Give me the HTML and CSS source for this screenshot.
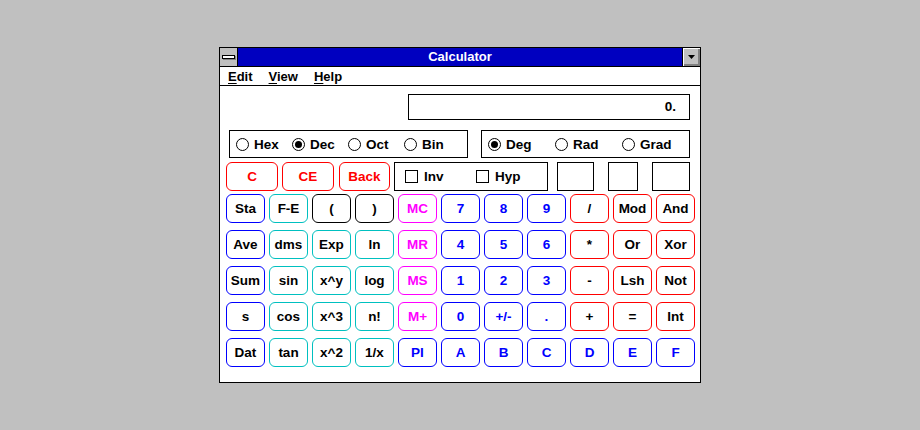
FILE: index.html
```html
<!DOCTYPE html>
<html lang="en">
<head>
    <meta charset="UTF-8">
    <title>Calculator</title>
    <link rel="stylesheet" href="styles.css">
</head>
<body>
    <div class="window">
        <div class="titlebar">
            <div class="sysmenu"><span class="sysbar"></span></div>
            <div class="title">Calculator</div>
            <div class="minbtn">
                <svg width="9" height="5" viewBox="0 0 9 5"><path d="M1 0h7L4.5 4z" fill="#000"/></svg>
            </div>
        </div>
        <div class="menubar">
            <span class="menu-item"><u>E</u>dit</span>
            <span class="menu-item"><u>V</u>iew</span>
            <span class="menu-item"><u>H</u>elp</span>
        </div>

        <div class="content">
            <div class="display-row">
                <div class="display">0.</div>
            </div>

            <div class="mode-row">
                <div class="group radix">
                    <span class="radio"><span class="circle"></span>Hex</span>
                    <span class="radio"><span class="circle on"></span>Dec</span>
                    <span class="radio"><span class="circle"></span>Oct</span>
                    <span class="radio"><span class="circle"></span>Bin</span>
                </div>
                <div class="group angle">
                    <span class="radio"><span class="circle on"></span>Deg</span>
                    <span class="radio"><span class="circle"></span>Rad</span>
                    <span class="radio"><span class="circle"></span>Grad</span>
                </div>
            </div>

            <div class="clear-row">
                <button class="key red wide c">C</button>
                <button class="key red wide ce">CE</button>
                <button class="key red wide back">Back</button>
                <div class="group invhyp">
                    <span class="check"><span class="box"></span>Inv</span>
                    <span class="check"><span class="box"></span>Hyp</span>
                </div>
                <div class="memo memo1"></div>
                <div class="memo memo2"></div>
                <div class="memo memo3"></div>
            </div>

            <div class="keys">
                <button class="key stat">Sta</button>
                <button class="key fn">F-E</button>
                <button class="key paren">(</button>
                <button class="key paren">)</button>
                <button class="key mem">MC</button>
                <button class="key num">7</button>
                <button class="key num">8</button>
                <button class="key num">9</button>
                <button class="key op">/</button>
                <button class="key op">Mod</button>
                <button class="key op">And</button>

                <button class="key stat">Ave</button>
                <button class="key fn">dms</button>
                <button class="key fn">Exp</button>
                <button class="key fn">ln</button>
                <button class="key mem">MR</button>
                <button class="key num">4</button>
                <button class="key num">5</button>
                <button class="key num">6</button>
                <button class="key op">*</button>
                <button class="key op">Or</button>
                <button class="key op">Xor</button>

                <button class="key stat">Sum</button>
                <button class="key fn">sin</button>
                <button class="key fn">x^y</button>
                <button class="key fn">log</button>
                <button class="key mem">MS</button>
                <button class="key num">1</button>
                <button class="key num">2</button>
                <button class="key num">3</button>
                <button class="key op">-</button>
                <button class="key op">Lsh</button>
                <button class="key op">Not</button>

                <button class="key stat">s</button>
                <button class="key fn">cos</button>
                <button class="key fn">x^3</button>
                <button class="key fn">n!</button>
                <button class="key mem">M+</button>
                <button class="key num">0</button>
                <button class="key num">+/-</button>
                <button class="key num">.</button>
                <button class="key op">+</button>
                <button class="key op">=</button>
                <button class="key op">Int</button>

                <button class="key stat">Dat</button>
                <button class="key fn">tan</button>
                <button class="key fn">x^2</button>
                <button class="key fn">1/x</button>
                <button class="key num">PI</button>
                <button class="key num">A</button>
                <button class="key num">B</button>
                <button class="key num">C</button>
                <button class="key num">D</button>
                <button class="key num">E</button>
                <button class="key num">F</button>
            </div>
        </div>
    </div>
</body>
</html>
```

FILE: styles.css
```css
body {
    margin: 0;
    height: 430px;
    background-color: #c0c0c0;
    font-family: "Liberation Sans", Arial, sans-serif;
    font-size: 13.5px;
    font-weight: bold;
    display: flex;
    align-items: center;
    justify-content: center;
}
.window {
    box-sizing: border-box;
    width: 482px;
    height: 336px;
    border: 1px solid #000;
    background-color: #fff;
    display: flex;
    flex-direction: column;
}

/* title bar */
.titlebar {
    height: 18px;
    border-bottom: 1px solid #000;
    background-color: #0000c0;
    display: flex;
}
.sysmenu {
    width: 17px;
    border-right: 1px solid #000;
    background-color: #c0c0c0;
    display: flex;
    align-items: center;
    justify-content: center;
}
.sysbar {
    width: 11px;
    height: 2px;
    border: 1px solid #000;
    background-color: #fff;
    box-shadow: 1px 1px 0 #808080;
}
.title {
    flex: 1;
    color: #fff;
    text-align: center;
    line-height: 18px;
    font-size: 13px;
}
.minbtn {
    box-sizing: border-box;
    width: 18px;
    border-left: 1px solid #000;
    background-color: #c0c0c0;
    box-shadow: inset 1px 1px 0 #fff, inset -2px -2px 0 #808080;
    display: flex;
    align-items: center;
    justify-content: center;
}

/* menu */
.menubar {
    height: 18px;
    border-bottom: 1px solid #000;
    display: flex;
    align-items: center;
    padding-left: 8px;
    font-size: 13px;
}
.menu-item {
    margin-right: 16px;
}
.menu-item u {
    text-decoration-thickness: 1px;
    text-underline-offset: 2px;
}

/* body */
.content {
    padding-left: 6px;
}
.display-row {
    display: flex;
    justify-content: flex-end;
    margin-top: 8px;
}
.display {
    box-sizing: border-box;
    width: 282px;
    height: 26px;
    margin-right: 10px;
    border: 1px solid #000;
    text-align: right;
    padding-right: 13px;
    line-height: 24px;
}
.mode-row {
    display: flex;
    margin-top: 10px;
}
.group {
    box-sizing: border-box;
    border: 1px solid #000;
    display: flex;
    align-items: center;
}
.radix {
    width: 239px;
    height: 28px;
    margin-left: 3px;
    padding-left: 6px;
}
.angle {
    width: 209px;
    height: 28px;
    margin-left: 13px;
    padding-left: 6px;
}
.radio {
    display: flex;
    align-items: center;
    width: 56px;
}
.angle .radio {
    width: 70px;
}
.radio .circle {
    box-sizing: border-box;
    width: 13px;
    height: 13px;
    border: 1px solid #000;
    border-radius: 50%;
    margin-right: 5px;
    display: flex;
    align-items: center;
    justify-content: center;
}
.radio .circle.on::after {
    content: "";
    width: 7px;
    height: 7px;
    border-radius: 50%;
    background-color: #000;
}

.clear-row {
    display: flex;
    height: 29px;
    margin-top: 4px;
}
.invhyp {
    width: 154px;
    margin-left: 4px;
    padding-left: 10px;
}
.check {
    display: flex;
    align-items: center;
    width: 76px;
}
.check .box {
    box-sizing: border-box;
    width: 13px;
    height: 13px;
    border: 1px solid #000;
    margin-right: 6px;
}
.memo {
    box-sizing: border-box;
    border: 1px solid #000;
}
.memo1 {
    width: 37px;
    margin-left: 9px;
}
.memo2 {
    width: 30px;
    margin-left: 14px;
}
.memo3 {
    width: 38px;
    margin-left: 14px;
}

/* keys */
.key {
    box-sizing: border-box;
    margin: 0;
    padding: 0;
    background-color: #fff;
    border: 1px solid #000;
    border-radius: 6px;
    font-family: inherit;
    font-size: 13.5px;
    font-weight: bold;
    color: #000;
    height: 29px;
}
.wide {
    width: 52px;
}
.ce {
    margin-left: 4px;
}
.back {
    width: 51px;
    margin-left: 5px;
}
.red {
    border-color: #ff0000;
    color: #ff0000;
}
.keys {
    display: grid;
    grid-template-columns: repeat(11, 39px);
    grid-auto-rows: 29px;
    column-gap: 4px;
    row-gap: 7px;
    margin-top: 3px;
}
.stat {
    border-color: #0000ff;
}
.fn {
    border-color: #00c0c0;
}
.paren {
    border-color: #000;
}
.mem {
    border-color: #ff00ff;
    color: #ff00ff;
}
.num {
    border-color: #0000ff;
    color: #0000ff;
}
.op {
    border-color: #ff0000;
}
```
